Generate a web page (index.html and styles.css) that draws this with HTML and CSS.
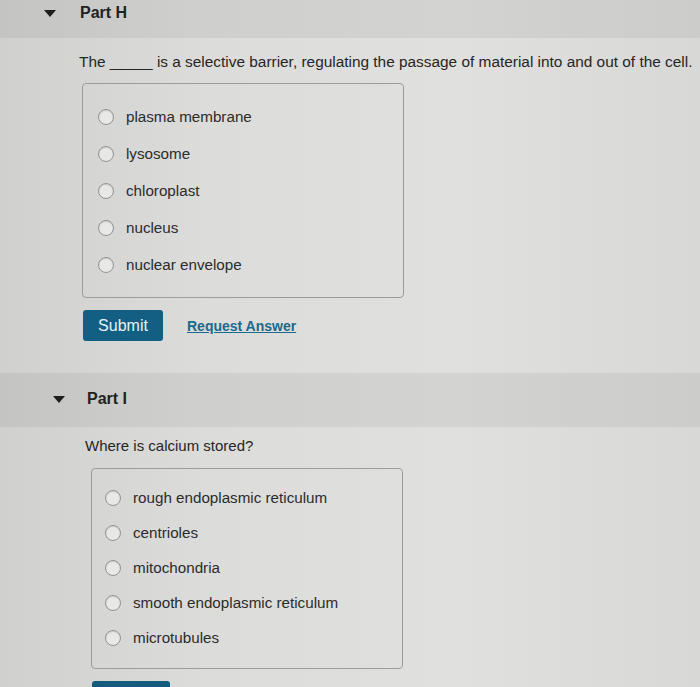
FILE: index.html
```html
<!DOCTYPE html>
<html>
<head>
<meta charset="utf-8">
<link rel="stylesheet" href="styles.css">
</head>
<body>
<div class="page">
  <div class="part-header part-h">
    <span class="caret"></span>
    <span class="part-title">Part H</span>
  </div>
  <div class="section section-h">
    <p class="question">The <span class="blank">_____</span> is a selective barrier, regulating the passage of material into and out of the cell.</p>
    <div class="choices choices-h">
      <div class="choice"><span class="radio"></span><span class="label">plasma membrane</span></div>
      <div class="choice"><span class="radio"></span><span class="label">lysosome</span></div>
      <div class="choice"><span class="radio"></span><span class="label">chloroplast</span></div>
      <div class="choice"><span class="radio"></span><span class="label">nucleus</span></div>
      <div class="choice"><span class="radio"></span><span class="label">nuclear envelope</span></div>
    </div>
    <div class="actions">
      <button class="submit">Submit</button>
      <a class="request" href="#">Request Answer</a>
    </div>
  </div>
  <div class="part-header part-i">
    <span class="caret"></span>
    <span class="part-title">Part I</span>
  </div>
  <div class="section section-i">
    <p class="question">Where is calcium stored?</p>
    <div class="choices choices-i">
      <div class="choice"><span class="radio"></span><span class="label">rough endoplasmic reticulum</span></div>
      <div class="choice"><span class="radio"></span><span class="label">centrioles</span></div>
      <div class="choice"><span class="radio"></span><span class="label">mitochondria</span></div>
      <div class="choice"><span class="radio"></span><span class="label">smooth endoplasmic reticulum</span></div>
      <div class="choice"><span class="radio"></span><span class="label">microtubules</span></div>
    </div>
    <div class="actions actions-i">
      <button class="submit submit-i"></button>
    </div>
  </div>
</div>
</body>
</html>
```
FILE: styles.css
```css
html, body {
  margin: 0;
  padding: 0;
}
body {
  width: 700px;
  height: 687px;
  overflow: hidden;
  font-family: "Liberation Sans", Arial, sans-serif;
  color: #262626;
  background: linear-gradient(to right, #d0d0ce 0%, #dcdcda 30%, #e0e0de 65%, #d8d8d6 100%);
}
.page {
  display: flex;
  flex-direction: column;
}
.part-header {
  display: flex;
  align-items: flex-start;
  background: rgba(0, 0, 0, 0.055);
}
.part-h {
  height: 38px;
  padding-left: 44px;
}
.part-h .caret {
  margin-top: 10px;
}
.part-h .part-title {
  margin-left: 24px;
  margin-top: 4px;
}
.part-i {
  height: 54px;
  margin-top: 32px;
  padding-left: 53px;
}
.part-i .caret {
  margin-top: 23px;
}
.part-i .part-title {
  margin-left: 22px;
  margin-top: 17px;
}
.caret {
  width: 0;
  height: 0;
  border-left: 6px solid transparent;
  border-right: 6px solid transparent;
  border-top: 7px solid #1e1e1e;
}
.part-title {
  font-size: 16px;
  font-weight: bold;
  line-height: 18px;
  color: #222;
}
.section {
  display: flex;
  flex-direction: column;
  align-items: flex-start;
}
.section-h {
  padding-left: 79px;
}
.section-i {
  padding-left: 85px;
}
.question {
  margin: 0;
  font-size: 15.4px;
  line-height: 18px;
  white-space: nowrap;
}
.section-h .question {
  margin-top: 15px;
}
.section-i .question {
  margin-top: 10px;
  font-size: 15px;
}
.choices {
  display: flex;
  flex-direction: column;
  border: 1px solid #9c9c9a;
  border-radius: 4px;
  box-sizing: border-box;
}
.choices-h {
  margin-top: 12px;
  margin-left: 3px;
  width: 322px;
  height: 215px;
  padding: 14px 0 0 15px;
}
.choices-h .choice {
  height: 37px;
}
.choices-i {
  margin-top: 13px;
  margin-left: 6px;
  width: 312px;
  height: 201px;
  padding: 11px 0 0 13px;
}
.choices-i .choice {
  height: 35px;
}
.choice {
  display: flex;
  align-items: center;
  gap: 12px;
}
.radio {
  width: 16px;
  height: 16px;
  box-sizing: border-box;
  border: 1.5px solid #939391;
  border-radius: 50%;
  background: #e8e8e6;
  box-shadow: inset 0 1px 1px rgba(0, 0, 0, 0.12);
  flex: none;
}
.label {
  font-size: 15.2px;
  line-height: 18px;
  color: #2c2c2c;
}
.actions {
  display: flex;
  align-items: center;
  gap: 24px;
  margin-top: 12px;
  margin-left: 4px;
}
.submit {
  width: 80px;
  height: 31px;
  border: none;
  border-radius: 3px;
  background: #135f84;
  color: #e8f1f5;
  font-family: "Liberation Sans", Arial, sans-serif;
  font-size: 16px;
  padding: 0;
}
.request {
  font-size: 14px;
  font-weight: bold;
  color: #1a6a8e;
  text-decoration: underline;
}
.actions-i {
  margin-top: 12px;
  margin-left: 7px;
}
.submit-i {
  width: 78px;
  height: 31px;
  background: #135c7e;
}
```
